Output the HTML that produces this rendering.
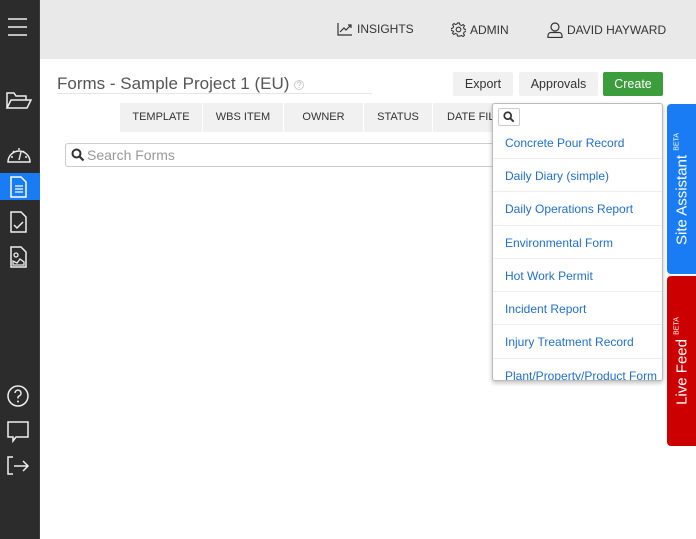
<!DOCTYPE html><html><head><style>
*{box-sizing:border-box;margin:0;padding:0}
body{width:696px;height:539px;overflow:hidden;background:#fff;font-family:"Liberation Sans",Arial,sans-serif;position:relative}
.sb{position:absolute;left:0;top:0;width:40px;height:539px;background:#2c2c2c;border-right:1px solid #3a3a3a}
.hd{position:absolute;left:40px;top:0;right:0;height:59px;background:#e9e9e9}
.nav{position:absolute;top:22px;font-size:12px;color:#333;display:flex;align-items:center;gap:4px}
svg{display:block}
.ic{position:absolute;left:5px}
.title{position:absolute;left:57px;top:74px;font-size:17px;color:#555;font-weight:300}
.uline{position:absolute;left:57px;top:93px;width:315px;border-top:1px solid #e6e6e6}
.btn{position:absolute;top:72px;height:24px;font-size:12.5px;line-height:24px;text-align:center;border-radius:2px;background:#f1f1f1;color:#333}
.filt{position:absolute;top:103px;height:29px;background:#f1f1f1;font-size:11px;color:#333;line-height:29px;text-align:center;white-space:nowrap;overflow:hidden}
.search{position:absolute;left:65px;top:143px;width:440px;height:24px;border:1px solid #ccc;border-radius:3px;font-size:14px;color:#999;line-height:22px;padding-left:21px}
.dd{position:absolute;left:492px;top:103px;width:171px;height:278px;background:#fff;border:1px solid #bbb;border-radius:3px;box-shadow:0 2px 5px rgba(0,0,0,.25);overflow:hidden}
.dd .it{height:33.3px;border-top:1px solid #eee;font-size:12px;color:#1f6fd1;line-height:34px;padding-left:12px;white-space:nowrap}
.tab{position:absolute;left:667px;width:29px;border-radius:4px 0 0 4px;color:#fff}
.tab span{position:absolute;left:50%;top:50%;transform:translate(-50%,-50%) rotate(-90deg);white-space:nowrap;font-size:15px;font-weight:300}
.tab small{font-size:7px;vertical-align:top}
</style></head><body>
<div class="sb">
<svg class="ic" style="top:16px" width="26" height="22" viewBox="0 0 26 22"><path d="M3 3h19M3 11h19M3 19h19" stroke="#eee" stroke-width="1.6"/></svg>
<svg class="ic" style="top:89px" width="28" height="22" viewBox="0 0 28 22"><path d="M2 19V4h7l2 3h10v4M2 19l4-8h20l-4 8z" stroke="#eee" stroke-width="1.5" fill="none"/></svg>
<svg class="ic" style="top:143px" width="28" height="22" viewBox="0 0 28 22"><path d="M3 19a11 11 0 1 1 22 0z" stroke="#eee" stroke-width="1.5" fill="none"/><path d="M14 17l2-8M6 14h2M20 14h2M8 8l1 1M19 8l-1 1M14 5v2" stroke="#eee" stroke-width="1.4"/></svg>
<div style="position:absolute;left:0;top:173px;width:40px;height:27px;background:#1a7cf5"></div>
<svg class="ic" style="top:175px;left:8px" width="22" height="24" viewBox="0 0 22 24"><path d="M3 2h10l5 5v15H3z" stroke="#fff" stroke-width="1.5" fill="none"/><path d="M7 11h8M7 14h8M7 17h8" stroke="#fff" stroke-width="1.3"/></svg>
<svg class="ic" style="top:210px;left:8px" width="22" height="24" viewBox="0 0 22 24"><path d="M3 2h10l5 5v15H3z" stroke="#eee" stroke-width="1.5" fill="none"/><path d="M6 15l3 3 6-6" stroke="#eee" stroke-width="1.5" fill="none"/></svg>
<svg class="ic" style="top:245px;left:8px" width="22" height="24" viewBox="0 0 22 24"><path d="M3 2h10l5 5v15H3z" stroke="#eee" stroke-width="1.5" fill="none"/><circle cx="8" cy="10" r="2" stroke="#eee" fill="none" stroke-width="1.3"/><path d="M5 20v-4l4 2 3-4 4 3v3z" stroke="#eee" stroke-width="1.3" fill="none"/></svg>
<svg class="ic" style="top:384px;left:6px" width="24" height="24" viewBox="0 0 24 24"><circle cx="12" cy="12" r="10" stroke="#eee" stroke-width="1.5" fill="none"/><path d="M9 9a3 3 0 1 1 4 3c-1 .5-1 1-1 2.5" stroke="#eee" stroke-width="1.5" fill="none"/><circle cx="12" cy="17.5" r="1" fill="#eee"/></svg>
<svg class="ic" style="top:420px;left:6px" width="24" height="24" viewBox="0 0 24 24"><path d="M2 2h20v15H10l-3 4v-4H2z" stroke="#eee" stroke-width="1.5" fill="none"/></svg>
<svg class="ic" style="top:455px;left:6px" width="24" height="22" viewBox="0 0 24 22"><path d="M7 2H2v17h5M8 11h14M17 6l5 5-5 5" stroke="#eee" stroke-width="1.5" fill="none"/></svg>
</div>
<div class="hd">
<div class="nav" style="left:297px"><svg width="16" height="14" viewBox="0 0 16 14"><path d="M1 1v12h14M3 10l4-4 2 2 5-5M11 3h3v3" stroke="#333" stroke-width="1.2" fill="none"/></svg>INSIGHTS</div>
<div class="nav" style="left:411px"><svg width="15" height="15" viewBox="0 0 16 16"><circle cx="8" cy="8" r="2.5" stroke="#333" fill="none" stroke-width="1.2"/><path d="M7 1h2l.5 2 1.7.8 1.8-1.1 1.4 1.4-1.1 1.8.8 1.7 2 .5v2l-2 .5-.8 1.7 1.1 1.8-1.4 1.4-1.8-1.1-1.7.8L9 15H7l-.5-2-1.7-.8-1.8 1.1-1.4-1.4 1.1-1.8L1.9 9.5 0 9V7l2-.5.8-1.7L1.7 3 3.1 1.6l1.8 1.1L6.5 2z" stroke="#333" fill="none" stroke-width="1.1"/></svg>ADMIN</div>
<div class="nav" style="left:507px"><svg width="16" height="16" viewBox="0 0 16 16"><circle cx="8" cy="5" r="4" stroke="#333" fill="none" stroke-width="1.2"/><path d="M1 15.5v-2a3 3 0 0 1 3-3h8a3 3 0 0 1 3 3v2z" stroke="#333" fill="none" stroke-width="1.2"/></svg>DAVID HAYWARD</div>
</div>
<div class="title">Forms - Sample Project 1 (EU) <span style="font-size:9px;color:#bbb;border:1px solid #ccc;border-radius:50%;display:inline-block;width:10px;height:10px;line-height:9px;text-align:center;vertical-align:middle">?</span></div>
<div class="uline"></div>
<div class="btn" style="left:453px;width:60px">Export</div>
<div class="btn" style="left:519px;width:79px">Approvals</div>
<div class="btn" style="left:603px;width:60px;background:#3c9d3c;color:#fff">Create</div>
<div class="filt" style="left:120px;width:82px">TEMPLATE</div>
<div class="filt" style="left:203px;width:80px">WBS ITEM</div>
<div class="filt" style="left:284px;width:79px">OWNER</div>
<div class="filt" style="left:364px;width:68px">STATUS</div>
<div class="filt" style="left:433px;width:80px;text-align:left;padding-left:14px">DATE FILTER</div>
<div class="search"><svg style="position:absolute;left:5px;top:4px" width="14" height="14" viewBox="0 0 14 14"><circle cx="5.5" cy="5.5" r="4" stroke="#333" stroke-width="2" fill="none"/><path d="M8.5 8.5l4 4" stroke="#333" stroke-width="2.2"/></svg>Search Forms</div>
<div class="dd">
<div style="height:23px;padding:4px 0 0 5px"><div style="width:22px;height:18px;border:1px solid #ccc;border-radius:2px;position:relative"><svg style="position:absolute;left:4px;top:2px" width="12" height="12" viewBox="0 0 14 14"><circle cx="5.5" cy="5.5" r="4" stroke="#333" stroke-width="2" fill="none"/><path d="M8.5 8.5l4 4" stroke="#333" stroke-width="2.2"/></svg></div></div>
<div class="it" style="border-top:none;height:31px;line-height:32px">Concrete Pour Record</div>
<div class="it">Daily Diary (simple)</div>
<div class="it">Daily Operations Report</div>
<div class="it">Environmental Form</div>
<div class="it">Hot Work Permit</div>
<div class="it">Incident Report</div>
<div class="it">Injury Treatment Record</div>
<div class="it">Plant/Property/Product Form</div>
</div>
<div class="tab" style="top:104px;height:170px;background:#1a7cf5"><span>Site Assistant <small>BETA</small></span></div>
<div class="tab" style="top:276px;height:170px;background:#cc0000"><span>Live Feed <small>BETA</small></span></div>
</body></html>
